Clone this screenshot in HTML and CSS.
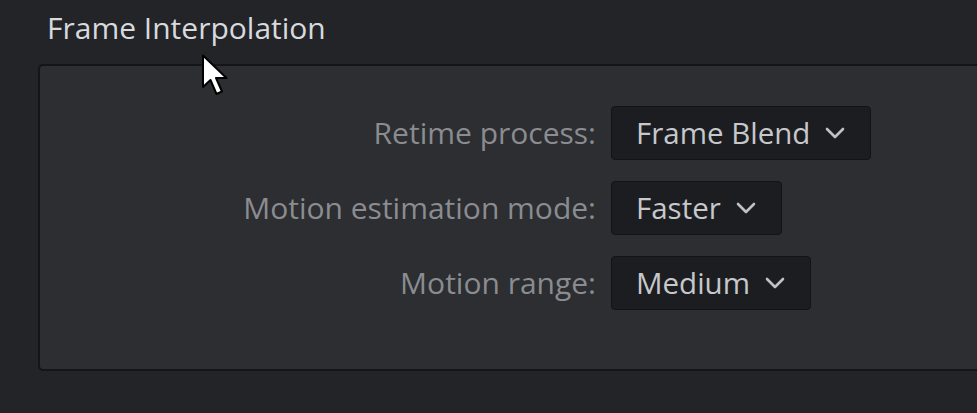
FILE: index.html
```html
<!DOCTYPE html>
<html>
<head>
<meta charset="utf-8">
<link rel="stylesheet" href="styles.css">
</head>
<body>
<div class="page">
  <h1 class="title">Frame Interpolation</h1>
  <section class="panel">
    <div class="form">
      <div class="label">Retime process:</div>
      <div class="select">Frame Blend<svg class="chev" viewBox="0 0 20 12" width="20" height="12"><path d="M2 2 L10 10 L18 2" fill="none" stroke="currentColor" stroke-width="2.6" stroke-linecap="round" stroke-linejoin="round"/></svg></div>
      <div class="label">Motion estimation mode:</div>
      <div class="select">Faster<svg class="chev" viewBox="0 0 20 12" width="20" height="12"><path d="M2 2 L10 10 L18 2" fill="none" stroke="currentColor" stroke-width="2.6" stroke-linecap="round" stroke-linejoin="round"/></svg></div>
      <div class="label">Motion range:</div>
      <div class="select">Medium<svg class="chev" viewBox="0 0 20 12" width="20" height="12"><path d="M2 2 L10 10 L18 2" fill="none" stroke="currentColor" stroke-width="2.6" stroke-linecap="round" stroke-linejoin="round"/></svg></div>
    </div>
  </section>
  <svg class="cursor" viewBox="0 0 28 44" width="28" height="44"><path d="M2 1.5 L2 33 L9.5 26 L15.5 40 L21 37.5 L15 24 L25.5 24 Z" fill="#ffffff" stroke="#000000" stroke-width="2" stroke-linejoin="round"/></svg>
</div>
</body>
</html>
```

FILE: styles.css
```css
html, body {
  margin: 0;
  padding: 0;
  background: #232428;
  overflow: hidden;
}
.page {
  position: relative;
  width: 977px;
  height: 413px;
  font-family: "Open Sans", "Noto Sans", sans-serif;
}
.title {
  margin: 0;
  padding: 10px 0 0 47px;
  font-size: 30px;
  font-weight: 400;
  line-height: 36px;
  color: #d8dade;
}
.panel {
  margin: 18px 0 0 38px;
  height: 303px;
  border: 2px solid #141518;
  border-right: none;
  border-radius: 5px 0 0 5px;
  background: #2c2e32;
}
.form {
  display: grid;
  grid-template-columns: 556px auto;
  column-gap: 15px;
  row-gap: 21px;
  padding-top: 40px;
  align-items: center;
  justify-items: start;
}
.label {
  justify-self: end;
  font-size: 30px;
  color: #8a8c90;
  line-height: 40px;
}
.select {
  display: flex;
  align-items: center;
  height: 52px;
  padding: 0 25px 0 24px;
  border: 1px solid #121315;
  border-radius: 4px;
  background: #1c1d20;
  color: #c6c8cb;
  font-size: 29.5px;
  line-height: 52px;
}
.chev {
  margin-left: 15px;
  color: #bfc1c4;
  display: block;
}
.cursor {
  position: absolute;
  left: 201px;
  top: 54px;
}
```
